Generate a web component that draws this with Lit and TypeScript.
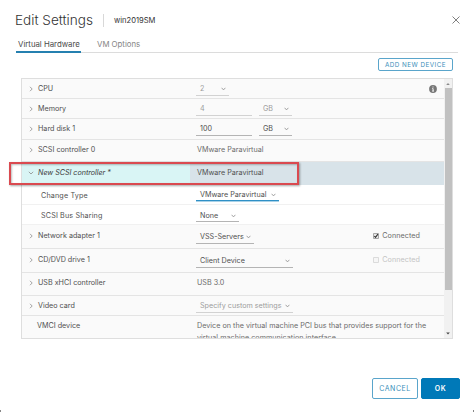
import { LitElement, css, html, nothing } from 'lit';
import { customElement, property } from 'lit/decorators.js';
import { classMap } from 'lit/directives/class-map.js';

interface Field {
  kind: 'select' | 'input';
  text: string;
  width: number;
  muted?: boolean;
  active?: boolean;
}

interface DeviceRow {
  label: string;
  height: number;
  arrow?: 'right' | 'down';
  child?: boolean;
  changed?: boolean;
  fields?: Field[];
  value?: string;
  info?: boolean;
  low?: boolean;
  connected?: 'on' | 'off';
}

const ROWS: DeviceRow[] = [
  { label: 'CPU', height: 20, arrow: 'right', info: true, fields: [{ kind: 'select', text: '2', width: 33, muted: true }] },
  {
    label: 'Memory',
    height: 20,
    arrow: 'right',
    fields: [
      { kind: 'input', text: '4', width: 56, muted: true },
      { kind: 'select', text: 'GB', width: 33, muted: true },
    ],
  },
  {
    label: 'Hard disk 1',
    height: 21,
    arrow: 'right',
    fields: [
      { kind: 'input', text: '100', width: 56 },
      { kind: 'select', text: 'GB', width: 33 },
    ],
  },
  { label: 'SCSI controller 0', height: 22, arrow: 'right', value: 'VMware Paravirtual' },
  { label: 'New SCSI controller *', height: 23, arrow: 'down', changed: true, value: 'VMware Paravirtual' },
  { label: 'Change Type', height: 20, child: true, fields: [{ kind: 'select', text: 'VMware Paravirtual', width: 83, active: true }] },
  { label: 'SCSI Bus Sharing', height: 20, child: true, fields: [{ kind: 'select', text: 'None', width: 43 }] },
  { label: 'Network adapter 1', height: 24, arrow: 'right', low: true, connected: 'on', fields: [{ kind: 'select', text: 'VSS-Servers', width: 58 }] },
  { label: 'CD/DVD drive 1', height: 24, arrow: 'right', low: true, connected: 'off', fields: [{ kind: 'select', text: 'Client Device', width: 97 }] },
  { label: 'USB xHCI controller', height: 23, arrow: 'right', value: 'USB 3.0' },
  { label: 'Video card', height: 20, arrow: 'right', fields: [{ kind: 'select', text: 'Specify custom settings', width: 97, muted: true }] },
  {
    label: 'VMCI device',
    height: 32,
    value: 'Device on the virtual machine PCI bus that provides support for the virtual machine communication interface.',
  },
];

@customElement('device-row')
export class DeviceRowElement extends LitElement {
  static styles = css`
    :host {
      display: block;
    }

    .row {
      box-sizing: border-box;
      display: grid;
      grid-template-columns: 168px 1fr;
      background: #fafafa;
      border-bottom: 1px solid #e4e4e4;
      color: #505050;
    }

    .row.child {
      background: #fff;
      border-color: #f1f1f1;
    }

    .row.changed {
      background: #d8e3e9;
      border-color: #d8e3e9;
    }

    .name {
      display: flex;
      align-items: flex-start;
      gap: 4px;
      padding: 5px 0 0 6px;
      line-height: 10px;
      white-space: nowrap;
    }

    .child .name {
      padding: 6px 0 0 19px;
      letter-spacing: 0.14px;
    }

    .low .name {
      padding-top: 6px;
    }

    .plain .name {
      padding-left: 15px;
    }

    .changed .name {
      padding-top: 6px;
      background: #d9f5f5;
      font-style: italic;
      letter-spacing: -0.04px;
      color: #3c3c3c;
    }

    .arrow {
      flex: none;
      width: 6px;
      height: 6px;
      margin-top: 2px;
      fill: none;
      stroke: #8c8c8c;
      stroke-width: 0.8;
    }

    .cell {
      display: flex;
      align-items: flex-start;
      padding-left: 6px;
      min-width: 0;
    }

    .text {
      width: 234px;
      padding: 5px 0 0 1px;
      line-height: 10px;
      color: #6b6b6b;
    }

    .changed .text {
      padding-top: 6px;
      color: #505050;
    }

    .plain .text {
      line-height: 12px;
      padding-top: 4px;
      letter-spacing: 0.02px;
    }

    .field {
      box-sizing: border-box;
      display: flex;
      align-items: center;
      justify-content: space-between;
      height: 13px;
      margin: 4px 7px 0 0;
      padding: 0 3px 1px 4px;
      border-bottom: 1px solid #b4b4b4;
      white-space: nowrap;
      color: #505050;
    }

    .child .field {
      padding: 1px 3px 0 4px;
    }

    .low .field {
      height: 14px;
      margin-top: 5px;
      padding: 1px 3px 0 4px;
    }

    .field.muted {
      color: #9c9c9c;
      border-color: #d2d2d2;
    }

    .field.active {
      height: 12px;
      border-color: #2f90c6;
      box-shadow: 0 1px #a9d2e8;
    }

    .caret {
      width: 5px;
      height: 4px;
      fill: none;
      stroke: #8c8c8c;
      stroke-width: 0.8;
    }

    .info {
      width: 8px;
      height: 8px;
      margin: 6px 7px 0 auto;
    }

    .connected {
      display: flex;
      align-items: center;
      gap: 3px;
      margin: 5px 24px 0 auto;
      line-height: 11px;
      color: #6b6b6b;
      letter-spacing: 0.06px;
    }

    .connected.off {
      color: #c4c4c4;
    }

    .box {
      width: 6px;
      height: 6px;
    }
  `;

  @property({ attribute: false }) row!: DeviceRow;

  private renderField(field: Field) {
    return html`
      <div
        class=${classMap({ field: true, muted: !!field.muted, active: !!field.active })}
        style="width: ${field.width}px"
      >
        <span>${field.text}</span>
        ${field.kind === 'select'
          ? html`<svg class="caret" viewBox="0 0 5 4"><path d="M0.6 0.8 2.5 2.9 4.4 0.8" /></svg>`
          : nothing}
      </div>
    `;
  }

  private renderConnected(state: string) {
    const on = state === 'on';
    return html`
      <div class="connected ${state}">
        <svg class="box" viewBox="0 0 6 6">
          <rect x="0.4" y="0.4" width="5.2" height="5.2" rx="0.6" fill=${on ? '#e8e8e8' : '#f6f6f6'} stroke=${on ? '#8a8a8a' : '#cfcfcf'} stroke-width="0.8" />
          ${on
            ? html`<svg viewBox="0 0 6 6"><path d="M1.3 3 2.5 4.3 4.9 1.2" fill="none" stroke="#333" stroke-width="1.1" /></svg>`
            : nothing}
        </svg>
        <span>Connected</span>
      </div>
    `;
  }

  render() {
    const { row } = this;
    const classes = {
      row: true,
      child: !!row.child,
      changed: !!row.changed,
      low: !!row.low,
      plain: !row.arrow && !row.child,
    };
    return html`
      <div class=${classMap(classes)} style="height: ${row.height}px">
        <div class="name">
          ${row.arrow
            ? html`<svg class="arrow" viewBox="0 0 6 6">
                <path d=${row.arrow === 'right' ? 'M2 0.8 4.2 3 2 5.2' : 'M0.8 1.8 3 4 5.2 1.8'} />
              </svg>`
            : nothing}
          <span>${row.label}</span>
        </div>
        <div class="cell">
          ${row.value ? html`<div class="text">${row.value}</div>` : nothing}
          ${row.fields?.map((field) => this.renderField(field))}
          ${row.info
            ? html`<svg class="info" viewBox="0 0 8 8">
                <circle cx="4" cy="4" r="3.9" fill="#777" />
                <path d="M4 1.5V2.5M3.2 3.6H4.1V6M3.1 6.1H5" fill="none" stroke="#fff" stroke-width="0.9" />
              </svg>`
            : nothing}
          ${row.connected ? this.renderConnected(row.connected) : nothing}
        </div>
      </div>
    `;
  }
}

@customElement('app-root')
export class AppRoot extends LitElement {
  static styles = css`
    :host {
      display: block;
      position: relative;
      box-sizing: border-box;
      width: 474px;
      height: 412px;
      overflow: hidden;
      background: #fff;
      font: 400 7.2px/10px Inter, 'Open Sans', sans-serif;
      color: #565656;
    }

    header {
      display: flex;
      align-items: center;
      height: 40px;
      box-sizing: border-box;
      padding: 0 14px 0 15px;
    }

    .title {
      margin: 0;
      font-size: 13.6px;
      font-weight: 300;
      line-height: 18px;
      color: #333;
      white-space: nowrap;
    }

    .machine {
      margin-left: 10px;
      padding-left: 10px;
      border-left: 1px solid #d8d8d8;
      font-size: 7.6px;
      line-height: 13px;
      color: #333;
    }

    .close {
      width: 8px;
      height: 8px;
      margin-left: auto;
      stroke: #808080;
      stroke-width: 1;
    }

    .tabs {
      display: flex;
      height: 13px;
      box-sizing: border-box;
      margin: 0 16px;
      gap: 14px;
      border-bottom: 1px solid #dcdcdc;
      font-size: 7.8px;
    }

    .tab {
      box-sizing: border-box;
      height: 13px;
      padding: 0 2px;
      line-height: 9px;
      color: #858585;
      white-space: nowrap;
    }

    .tab.selected {
      width: 65px;
      border-bottom: 2px solid #2580b0;
      color: #4a4a4a;
    }

    .toolbar {
      display: flex;
      justify-content: flex-end;
      padding: 5px 21px 7px 0;
    }

    button {
      box-sizing: border-box;
      margin: 0;
      padding: 0;
      border: 1px solid #5aa5cb;
      border-radius: 2px;
      background: #fff;
      color: #3b8fba;
      font-family: inherit;
      text-align: center;
      white-space: nowrap;
    }

    .add {
      width: 75px;
      height: 13px;
      font-size: 6.3px;
      line-height: 12px;
      letter-spacing: 0.46px;
    }

    .panel {
      display: flex;
      box-sizing: border-box;
      width: 432px;
      height: 261px;
      margin-left: 21px;
      border: 1px solid #dedede;
      overflow: hidden;
    }

    .rows {
      flex: 1;
      min-width: 0;
    }

    .scrollbar {
      display: flex;
      flex-direction: column;
      align-items: center;
      width: 8px;
      background: #f1f1f1;
    }

    .thumb {
      width: 7px;
      height: 202px;
      background: #c1c1c1;
    }

    .step {
      width: 8px;
      height: 9px;
      fill: #8a8a8a;
    }

    .step.down {
      margin-top: auto;
      fill: #444;
    }

    footer {
      display: flex;
      justify-content: flex-end;
      gap: 3px;
      padding: 39px 14px 0 0;
    }

    .cancel,
    .ok {
      height: 21px;
      font-size: 7px;
      line-height: 20px;
      letter-spacing: 0.5px;
    }

    .cancel {
      width: 46px;
    }

    .ok {
      width: 39px;
      border-color: #0079b8;
      background: #0079b8;
      color: #fff;
      font-weight: 600;
    }

    .highlight {
      position: absolute;
      left: 9px;
      top: 162px;
      box-sizing: border-box;
      width: 290px;
      height: 23px;
      border: 2px solid #da4a50;
      box-shadow: 1px 1px 2px rgba(0, 0, 0, 0.35), inset 1px 1px 2px rgba(0, 0, 0, 0.25);
    }

    .corner {
      position: absolute;
      bottom: 0;
      width: 1px;
      height: 2px;
      background: #888;
    }

    .corner.left {
      left: 0;
    }

    .corner.right {
      right: 0;
    }
  `;

  render() {
    return html`
      <header>
        <h1 class="title">Edit Settings</h1>
        <span class="machine">win2019SM</span>
        <svg class="close" viewBox="0 0 8 8"><path d="M0.5 0.5 7.5 7.5M7.5 0.5 0.5 7.5" /></svg>
      </header>
      <nav class="tabs">
        <span class="tab selected">Virtual Hardware</span>
        <span class="tab">VM Options</span>
      </nav>
      <div class="toolbar"><button class="add">ADD NEW DEVICE</button></div>
      <div class="panel">
        <div class="rows">${ROWS.map((row) => html`<device-row .row=${row}></device-row>`)}</div>
        <div class="scrollbar">
          <svg class="step" viewBox="0 0 8 9"><path d="M2.2 6 4 4 5.8 6Z" /></svg>
          <div class="thumb"></div>
          <svg class="step down" viewBox="0 0 8 9"><path d="M2.2 3.5 4 5.5 5.8 3.5Z" /></svg>
        </div>
      </div>
      <footer>
        <button class="cancel">CANCEL</button>
        <button class="ok">OK</button>
      </footer>
      <div class="highlight"></div>
      <div class="corner left"></div>
      <div class="corner right"></div>
    `;
  }
}

declare global {
  interface HTMLElementTagNameMap {
    'app-root': AppRoot;
    'device-row': DeviceRowElement;
  }
}
